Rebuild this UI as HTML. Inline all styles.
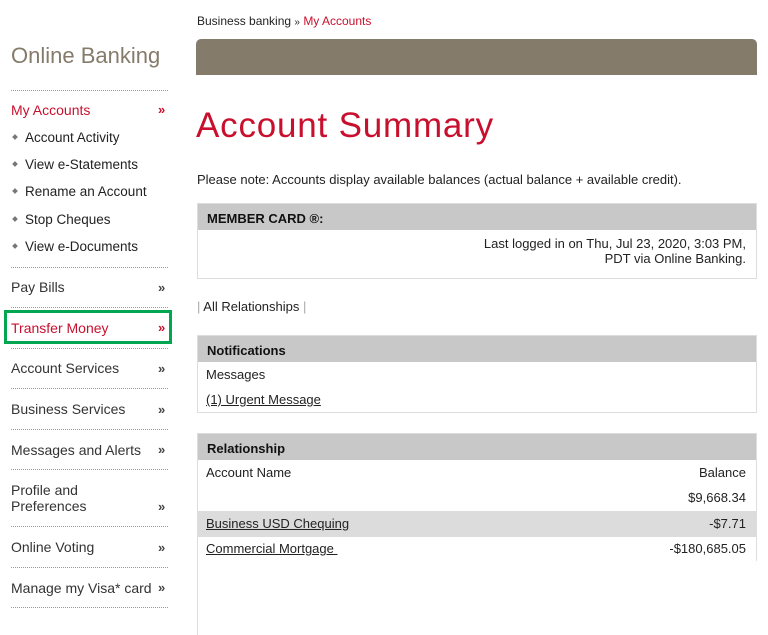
<!DOCTYPE html>
<html><head><meta charset="utf-8"><style>
*{margin:0;padding:0;box-sizing:border-box}
body{width:768px;height:635px;background:#fff;font-family:"Liberation Sans",Arial,sans-serif;color:#222;position:relative;overflow:hidden}
.a{position:absolute;white-space:nowrap}
.dot{position:absolute;left:11px;width:157px;height:0;border-top:1px dotted #999}
.nav{position:absolute;left:11px;font-size:14px;color:#333;line-height:16px}
.arr{position:absolute;left:158px;font-size:13px;color:#444;font-weight:bold;line-height:16px}
.sub{position:absolute;left:11px;font-size:13.5px;color:#222;line-height:16px}
.sub b{display:inline-block;width:4px;height:4px;background:#777;margin:0 8px 3px 2px;vertical-align:middle;transform:rotate(45deg)}
.box{position:absolute;left:197px;width:560px;border:1px solid #ddd}
.hd{background:#c8c8c8;height:26px;font-weight:bold;font-size:13px;padding:7px 0 0 9px;color:#111}
.t{font-size:13px;color:#222}
u{text-decoration:underline}
</style></head><body>
<div class="a" style="left:11px;top:43px;font-size:22px;color:#857b6b">Online Banking</div>
<div class="dot" style="top:90px"></div>
<div class="nav" style="top:102px;color:#c8102e">My Accounts</div><div class="arr" style="top:102px;color:#c8102e">»</div>
<div class="sub" style="top:130px"><b></b>Account Activity</div>
<div class="sub" style="top:157px"><b></b>View e-Statements</div>
<div class="sub" style="top:184px"><b></b>Rename an Account</div>
<div class="sub" style="top:212px"><b></b>Stop Cheques</div>
<div class="sub" style="top:239px"><b></b>View e-Documents</div>
<div class="dot" style="top:267px"></div>
<div class="nav" style="top:279px">Pay Bills</div><div class="arr" style="top:280px">»</div>
<div class="dot" style="top:307px"></div>
<div class="nav" style="top:320px;color:#c8102e">Transfer Money</div><div class="arr" style="top:320px;color:#c8102e">»</div>
<div class="a" style="left:4px;top:310px;width:168px;height:34px;border:3px solid #00a650"></div>
<div class="dot" style="top:348px"></div>
<div class="nav" style="top:360px">Account Services</div><div class="arr" style="top:361px">»</div>
<div class="dot" style="top:388px"></div>
<div class="nav" style="top:401px">Business Services</div><div class="arr" style="top:402px">»</div>
<div class="dot" style="top:429px"></div>
<div class="nav" style="top:442px">Messages and Alerts</div><div class="arr" style="top:442px">»</div>
<div class="dot" style="top:469px"></div>
<div class="nav" style="top:482px">Profile and<br>Preferences</div><div class="arr" style="top:499px">»</div>
<div class="dot" style="top:526px"></div>
<div class="nav" style="top:539px">Online Voting</div><div class="arr" style="top:540px">»</div>
<div class="dot" style="top:567px"></div>
<div class="nav" style="top:580px">Manage my Visa* card</div><div class="arr" style="top:580px">»</div>
<div class="dot" style="top:607px"></div>

<div class="a" style="left:197px;top:14px;font-size:12px;color:#222">Business banking <span style="font-size:10px">»</span> <span style="color:#c8102e">My Accounts</span></div>
<div class="a" style="left:196px;top:39px;width:561px;height:36px;background:#857b6b;border-radius:5px 5px 0 0"></div>
<div class="a" style="left:196px;top:106px;font-size:35px;color:#c8102e;letter-spacing:0.8px">Account Summary</div>
<div class="a t" style="left:197px;top:172px">Please note: Accounts display available balances (actual balance + available credit).</div>

<div class="box" style="top:203px;height:76px"><div class="hd">MEMBER CARD ®:</div>
<div class="t" style="position:absolute;right:10px;top:32px;text-align:right;line-height:15px">Last logged in on Thu, Jul 23, 2020, 3:03 PM,<br>PDT via Online Banking.</div></div>

<div class="a t" style="left:197px;top:299px"><span style="color:#aaa">|</span> All Relationships <span style="color:#aaa">|</span></div>

<div class="box" style="top:335px;height:78px"><div class="hd">Notifications</div>
<div class="t" style="position:absolute;left:8px;top:31px">Messages</div>
<div class="t" style="position:absolute;left:8px;top:56px"><u>(1) Urgent Message</u></div></div>

<div class="box" style="top:433px;height:128px;border-bottom:none"><div class="hd">Relationship</div>
<div class="t" style="position:absolute;left:8px;top:31px">Account Name</div>
<div class="t" style="position:absolute;right:10px;top:31px">Balance</div>
<div class="t" style="position:absolute;right:10px;top:56px">$9,668.34</div>
<div style="position:absolute;left:0;right:0;top:77px;height:26px;background:#dcdcdc"></div>
<div class="t" style="position:absolute;left:8px;top:82px"><u>Business USD Chequing</u></div>
<div class="t" style="position:absolute;right:10px;top:82px">-$7.71</div>
<div class="t" style="position:absolute;left:8px;top:107px"><u>Commercial Mortgage&nbsp;</u></div>
<div class="t" style="position:absolute;right:10px;top:107px">-$180,685.05</div></div>
<div class="a" style="left:197px;top:561px;width:1px;height:74px;background:#ddd"></div>
</body></html>
